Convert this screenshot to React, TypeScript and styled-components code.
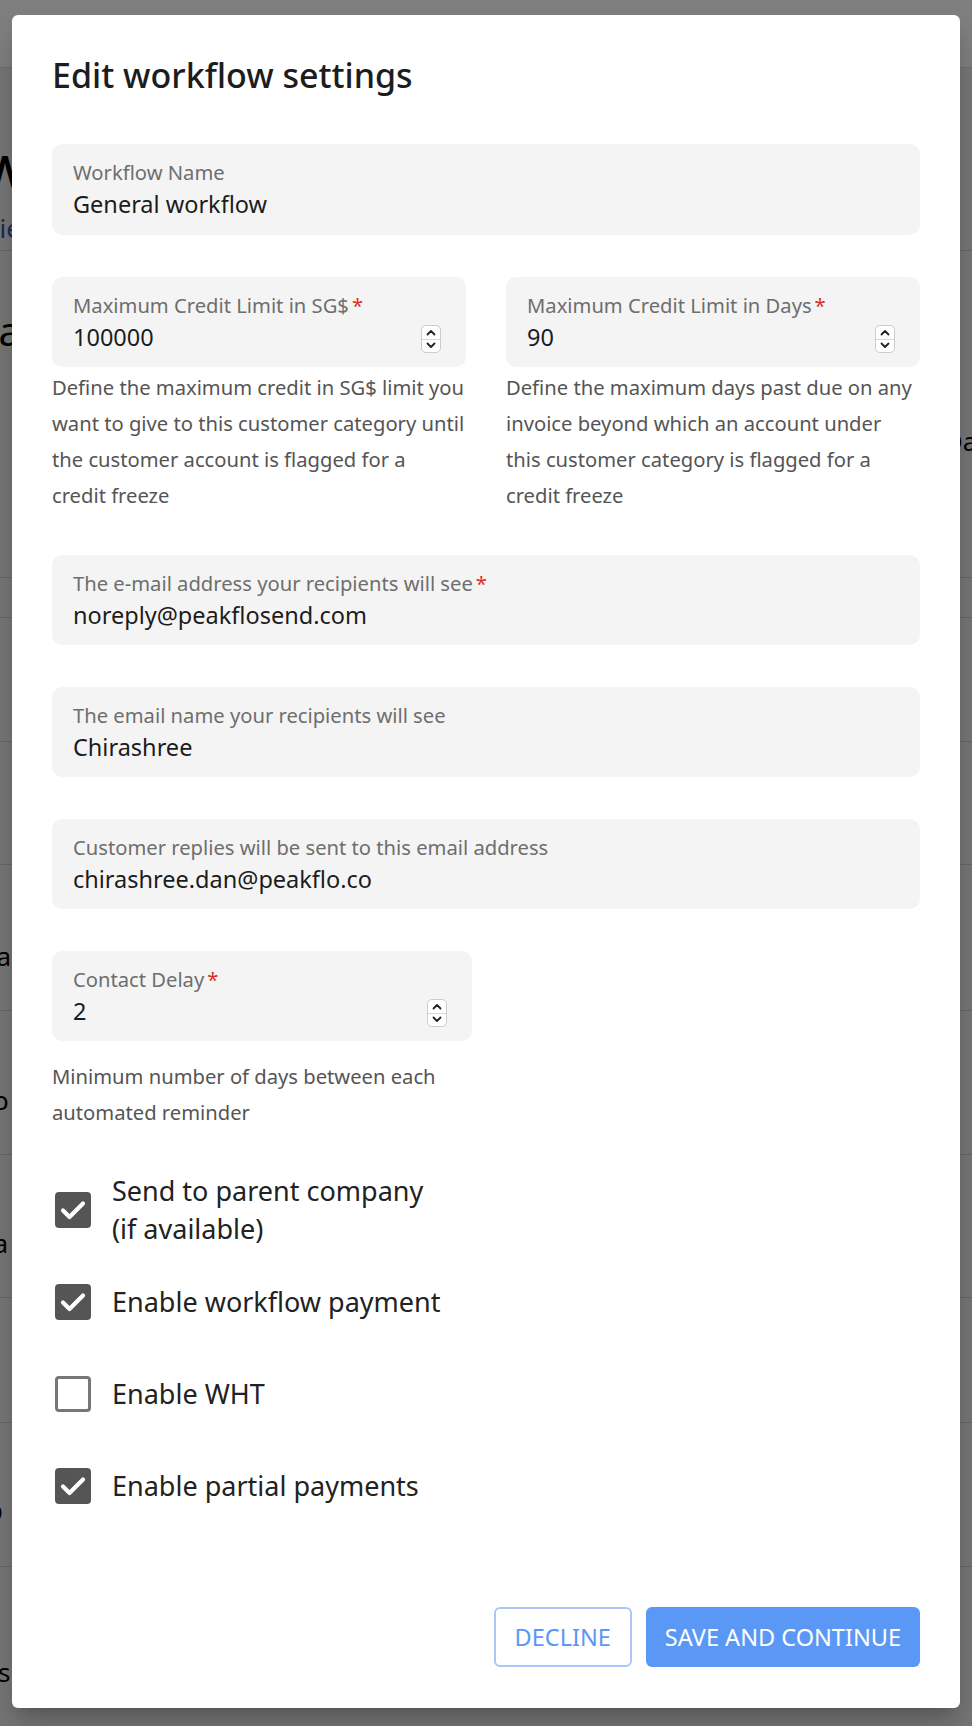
import styled, { createGlobalStyle } from "styled-components";

/* ── Global ── */
const GlobalStyle = createGlobalStyle`
  html, body {
    margin: 0;
    padding: 0;
  }
  body {
    font-family: "Noto Sans", "Open Sans", sans-serif;
    background: #ffffff;
  }
  * {
    box-sizing: border-box;
  }
`;

/* ── Page behind the dialog ── */
const Page = styled.div`
  position: relative;
  width: 972px;
  height: 1726px;
  overflow: hidden;
  background: #eeeeee;
`;

const TopBar = styled.header`
  height: 68px;
  background: #ffffff;
  border-bottom: 1px solid #dddddd;
`;

const PageContent = styled.main`
  margin-left: -16px;
  margin-right: -31px;
  padding-top: 76px;
`;

const PageTitle = styled.h1`
  margin: 0;
  font-size: 44px;
  font-weight: 600;
  line-height: 52px;
  color: #000;
`;

const PageLink = styled.a`
  display: block;
  margin-top: 14px;
  padding-bottom: 4px;
  border-bottom: 1px solid #cfcfcf;
  font-size: 26px;
  color: #2f5aa8;
`;

const PageSubTitle = styled.div`
  display: flex;
  justify-content: space-between;
  padding-top: 56px;
  height: 326px;
  font-size: 40px;
  line-height: 48px;
  color: #000;

  span:last-child {
    padding-top: 110px;
    font-size: 26px;
  }
`;

const TableRow = styled.div<{ $h: number }>`
  height: ${(p) => p.$h}px;
  display: flex;
  align-items: flex-end;
  padding-bottom: 36px;
  border-top: 1px solid #d0d0d0;
  font-size: 26px;
  color: #000;
`;

/* ── Dialog ── */
const Overlay = styled.div`
  position: absolute;
  inset: 0;
  background: rgba(0, 0, 0, 0.5);
  padding: 15px 12px 0;
`;

const Dialog = styled.div`
  width: 948px;
  height: 1693px;
  background: #ffffff;
  border-radius: 6px;
  padding: 40px 40px 41px;
  display: flex;
  flex-direction: column;
  box-shadow: 0 11px 15px -7px rgba(0, 0, 0, 0.2),
    0 24px 38px 3px rgba(0, 0, 0, 0.14);
`;

const Title = styled.h2`
  margin: 0;
  font-size: 34px;
  font-weight: 500;
  line-height: 41px;
  color: #1d1d1d;
`;

const Form = styled.div`
  margin-top: 48px;
  display: flex;
  flex-direction: column;
  gap: 42px;
`;

const Columns = styled.div`
  display: grid;
  grid-template-columns: 1fr 1fr;
  column-gap: 40px;
`;

const FieldGroup = styled.div<{ $width?: number }>`
  width: ${(p) => (p.$width ? `${p.$width}px` : "auto")};
`;

const FieldBox = styled.div<{ $h?: number }>`
  height: ${(p) => p.$h ?? 90}px;
  background: #f4f4f4;
  border-radius: 10px;
  padding: 16px 25px 0 21px;
`;

const Label = styled.div`
  font-size: 20.2px;
  line-height: 24px;
  color: #6e6e6e;
  white-space: nowrap;

  em {
    font-style: normal;
    color: #d93025;
    margin-left: 3px;
  }
`;

const ValueRow = styled.div`
  margin-top: 5px;
  height: 30px;
  display: flex;
  align-items: center;
  justify-content: space-between;
`;

const Value = styled.span`
  font-size: 23.5px;
  line-height: 30px;
  color: #1c1c1c;
`;

const Spinner = styled.div`
  width: 20px;
  height: 28px;
  margin-top: 4px;
  background: #ffffff;
  border: 1px solid #cccccc;
  border-radius: 5px;
  display: flex;
  flex-direction: column;
`;

const SpinHalf = styled.div<{ $top?: boolean }>`
  flex: 1;
  display: flex;
  align-items: center;
  justify-content: center;
  border-bottom: ${(p) => (p.$top ? "1px solid #d8d8d8" : "none")};
`;

const Helper = styled.p<{ $gap: number }>`
  margin: ${(p) => p.$gap}px 0 0;
  font-size: 20.2px;
  line-height: 36px;
  color: #555555;
`;

const CheckList = styled.div`
  display: flex;
  flex-direction: column;
  gap: 16px;
`;

const CheckRow = styled.label`
  min-height: 76px;
  display: flex;
  align-items: center;
  gap: 21px;
  padding-left: 3px;
`;

const Box = styled.span<{ $on: boolean }>`
  flex: none;
  width: 36px;
  height: 36px;
  border-radius: 4px;
  display: flex;
  align-items: center;
  justify-content: center;
  background: ${(p) => (p.$on ? "#555555" : "#ffffff")};
  border: ${(p) => (p.$on ? "none" : "3px solid #777777")};
`;

const CheckText = styled.span`
  font-size: 27px;
  line-height: 38px;
  color: #222222;
`;

const Footer = styled.div`
  margin-top: auto;
  display: flex;
  justify-content: flex-end;
  gap: 14px;
`;

const Button = styled.button<{ $primary?: boolean }>`
  height: 60px;
  padding: 0 19px;
  border-radius: 6px;
  font-family: "Noto Sans", sans-serif;
  font-size: 23.5px;
  font-weight: 400;
  cursor: pointer;
  border: ${(p) => (p.$primary ? "none" : "2px solid #a9c8f8")};
  background: ${(p) => (p.$primary ? "#5b98f6" : "#ffffff")};
  color: ${(p) => (p.$primary ? "#ffffff" : "#5b98f6")};
`;

/* ── Parts ── */
const Chevron = ({ up }: { up?: boolean }) => (
  <svg width="10" height="7" viewBox="0 0 10 7">
    <path
      d={up ? "M1.5 5.5 L5 2 L8.5 5.5" : "M1.5 1.5 L5 5 L8.5 1.5"}
      fill="none"
      stroke="#222"
      strokeWidth="1.8"
      strokeLinecap="round"
      strokeLinejoin="round"
    />
  </svg>
);

const NumberSpinner = () => (
  <Spinner>
    <SpinHalf $top>
      <Chevron up />
    </SpinHalf>
    <SpinHalf>
      <Chevron />
    </SpinHalf>
  </Spinner>
);

interface FieldProps {
  label: string;
  value: string;
  required?: boolean;
  number?: boolean;
  h?: number;
}

const Field = ({ label, value, required, number, h }: FieldProps) => (
  <FieldBox $h={h}>
    <Label>
      {label}
      {required && <em>*</em>}
    </Label>
    <ValueRow>
      <Value>{value}</Value>
      {number && <NumberSpinner />}
    </ValueRow>
  </FieldBox>
);

const Check = ({ on, children }: { on: boolean; children: React.ReactNode }) => (
  <CheckRow>
    <Box $on={on}>
      {on && (
        <svg width="36" height="36" viewBox="0 0 36 36">
          <path
            d="M8 18.5 L14.5 25 L28 11.5"
            fill="none"
            stroke="#fff"
            strokeWidth="4.2"
            strokeLinecap="round"
            strokeLinejoin="round"
          />
        </svg>
      )}
    </Box>
    <CheckText>{children}</CheckText>
  </CheckRow>
);

const rows = [
  { h: 40, text: "" },
  { h: 124, text: "" },
  { h: 123, text: "" },
  { h: 146, text: "ca" },
  { h: 144, text: "fo" },
  { h: 143, text: "ta" },
  { h: 125, text: "" },
  { h: 144, text: "D" },
  { h: 160, text: "ks" },
];

/* ── Component ── */
export default function App() {
  return (
    <>
      <GlobalStyle />
      <Page>
        <TopBar />
        <PageContent>
          <PageTitle>Workflows</PageTitle>
          <PageLink>View all workflows</PageLink>
          <PageSubTitle>
            <span>ta</span>
            <span>Days</span>
          </PageSubTitle>
          {rows.map((r, i) => (
            <TableRow key={i} $h={r.h}>
              {r.text}
            </TableRow>
          ))}
        </PageContent>

        <Overlay>
          <Dialog>
            <Title>Edit workflow settings</Title>
            <Form>
              <Field label="Workflow Name" value="General workflow" h={91} />

              <Columns>
                <FieldGroup>
                  <Field
                    label="Maximum Credit Limit in SG$"
                    value="100000"
                    required
                    number
                  />
                  <Helper $gap={2}>
                    Define the maximum credit in SG$ limit you want to give to
                    this customer category until the customer account is
                    flagged for a credit{"\u00a0"}freeze
                  </Helper>
                </FieldGroup>
                <FieldGroup>
                  <Field
                    label="Maximum Credit Limit in Days"
                    value="90"
                    required
                    number
                  />
                  <Helper $gap={2}>
                    Define the maximum days past due on any invoice beyond which
                    an account under this customer category is flagged for a
                    credit{"\u00a0"}freeze
                  </Helper>
                </FieldGroup>
              </Columns>

              <Field
                label="The e-mail address your recipients will see"
                value="noreply@peakflosend.com"
                required
              />
              <Field
                label="The email name your recipients will see"
                value="Chirashree"
              />
              <Field
                label="Customer replies will be sent to this email address"
                value="chirashree.dan@peakflo.co"
              />

              <FieldGroup $width={420}>
                <Field label="Contact Delay" value="2" required number />
                <Helper $gap={17}>
                  Minimum number of days between each automated reminder
                </Helper>
              </FieldGroup>

              <CheckList>
                <Check on>
                  Send to parent company
                  <br />
                  (if available)
                </Check>
                <Check on>Enable workflow payment</Check>
                <Check on={false}>Enable WHT</Check>
                <Check on>Enable partial payments</Check>
              </CheckList>
            </Form>

            <Footer>
              <Button>DECLINE</Button>
              <Button $primary>SAVE AND CONTINUE</Button>
            </Footer>
          </Dialog>
        </Overlay>
      </Page>
    </>
  );
}
